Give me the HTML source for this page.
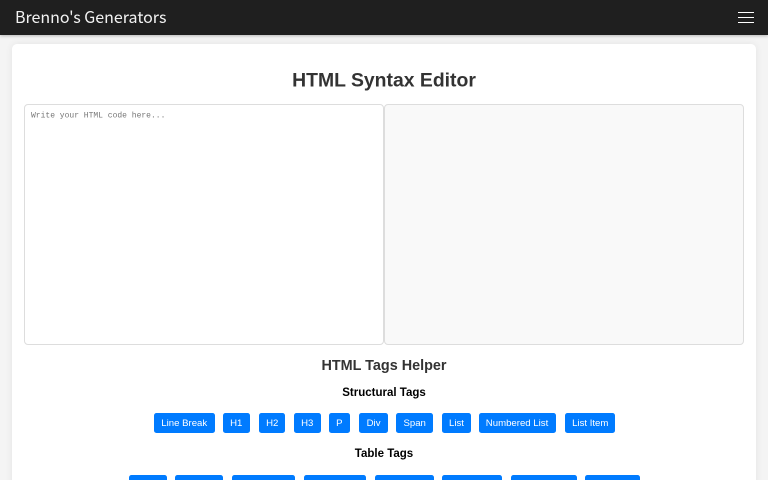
<!DOCTYPE html>
<html lang="en"><head><meta charset="utf-8"><title>HTML Syntax Editor</title>
<style>
*{box-sizing:border-box;margin:0;padding:0}
html,body{width:768px;height:480px;overflow:hidden;background:#f4f4f4;font-family:"Liberation Sans",Arial,sans-serif}
#r{position:absolute;left:0;top:0;width:768px;height:480px;overflow:hidden;filter:blur(.35px)}
nav{position:absolute;left:0;top:0;width:768px;height:35px;background:#1f1f1f;box-shadow:0 1px 3px rgba(0,0,0,.25)}
.brand{position:absolute;left:15px;top:5px;font:16px/22px "Noto Sans CJK JP",sans-serif;color:#f2f2f2;white-space:nowrap}
.bar{position:absolute;left:738px;width:16px;height:1.5px;background:#fff}
.card{position:absolute;left:12px;top:44px;width:744px;height:460px;background:#fff;border-radius:5px;box-shadow:0 0 8px rgba(0,0,0,.07)}
.t{position:absolute;left:0;width:768px;text-align:center;white-space:nowrap;transform:scale(.6)}
h1{top:68px;font-size:32.3px;line-height:24px;color:#333}
h2{top:357px;font-size:24px;line-height:18px;color:#333}
h3{font-size:19.2px;line-height:14px;color:#000}
.box{position:absolute;top:104px;width:360px;height:241px;border:1px solid #ddd;border-radius:4px}
.in{left:24px;background:#fff;color:#777}
.in span{position:absolute;left:5.5px;top:6px;font:13.33px/18px "Liberation Mono",monospace;transform:scale(.6);transform-origin:0 0;white-space:nowrap}
.out{left:384px;background:#f9f9f9}
.b{position:absolute;height:20px;background:#007bff;color:#fff;border-radius:2.5px;display:flex;align-items:center;justify-content:center;white-space:nowrap}
.b span{display:block;font-size:16px;line-height:20px;transform:translateY(.5px) scale(.6);flex:none}
</style></head><body>
<div id="r">
<nav><div class="brand">Brenno's Generators</div>
<div class="bar" style="top:11.5px"></div><div class="bar" style="top:16.5px"></div><div class="bar" style="top:21.5px"></div></nav>
<div class="card"></div>
<h1 class="t">HTML Syntax Editor</h1>
<div class="box in"><span>Write your HTML code here...</span></div>
<div class="box out"></div>
<h2 class="t">HTML Tags Helper</h2>
<h3 class="t" style="top:385.5px">Structural Tags</h3>
<div class="b" style="left:154px;width:61px;top:413px"><span>Line Break</span></div>
<div class="b" style="left:223px;width:27px;top:413px"><span>H1</span></div>
<div class="b" style="left:259px;width:26px;top:413px"><span>H2</span></div>
<div class="b" style="left:294px;width:27px;top:413px"><span>H3</span></div>
<div class="b" style="left:329px;width:21px;top:413px"><span>P</span></div>
<div class="b" style="left:359px;width:29px;top:413px"><span>Div</span></div>
<div class="b" style="left:396px;width:37px;top:413px"><span>Span</span></div>
<div class="b" style="left:442px;width:29px;top:413px"><span>List</span></div>
<div class="b" style="left:479px;width:77px;top:413px"><span>Numbered List</span></div>
<div class="b" style="left:565px;width:50px;top:413px"><span>List Item</span></div>
<h3 class="t" style="top:446.5px">Table Tags</h3>
<div class="b" style="left:129px;width:38px;top:475px"><span>Table</span></div>
<div class="b" style="left:175px;width:48px;top:475px"><span>Header</span></div>
<div class="b" style="left:232px;width:63px;top:475px"><span>Table Head</span></div>
<div class="b" style="left:304px;width:62px;top:475px"><span>Table Body</span></div>
<div class="b" style="left:375px;width:59px;top:475px"><span>Table Row</span></div>
<div class="b" style="left:442px;width:60px;top:475px"><span>Table Cell</span></div>
<div class="b" style="left:511px;width:66px;top:475px"><span>Table Footer</span></div>
<div class="b" style="left:585px;width:55px;top:475px"><span>Caption</span></div>
</div>
</body></html>
